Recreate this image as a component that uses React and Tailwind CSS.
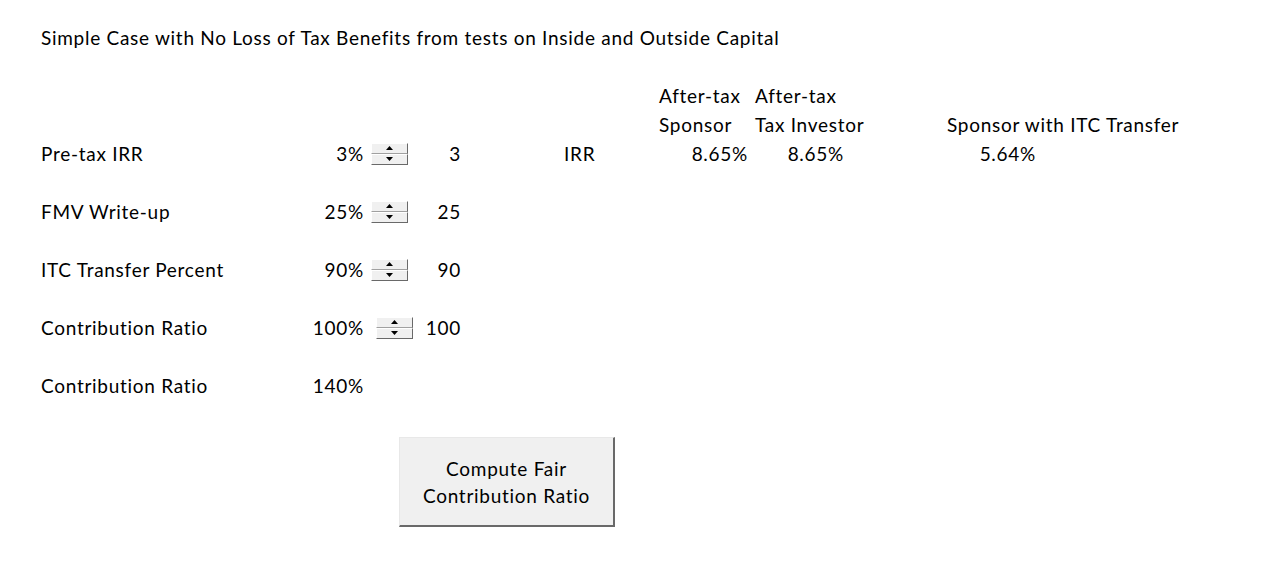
import React from "react";

const font = { fontFamily: "Lato, 'Open Sans', sans-serif", letterSpacing: "0.72px" };

function Spinner({ offset = "ml-[7px]" }) {
  return (
    <div className={`${offset} flex h-[22px] w-[37px] flex-col`}>
      <div className="flex h-[11px] items-center justify-center border-t border-l border-t-white border-l-white border-r border-b border-r-[#696969] border-b-[#a0a0a0] bg-[#f0f0f0]">
        <svg width="7" height="4" viewBox="0 0 7 4">
          <path d="M3.5 0 L7 4 L0 4 Z" fill="#000" />
        </svg>
      </div>
      <div className="flex h-[11px] items-center justify-center border-t border-l border-t-white border-l-white border-r border-b border-r-[#696969] border-b-[#696969] bg-[#f0f0f0]">
        <svg width="7" height="4" viewBox="0 0 7 4">
          <path d="M0 0 L7 0 L3.5 4 Z" fill="#000" />
        </svg>
      </div>
    </div>
  );
}

function InputRow({ label, value, spin, num, spinOffset }) {
  return (
    <>
      <div className="whitespace-nowrap">{label}</div>
      <div className="text-right">{value}</div>
      <div className="flex items-center">{spin && <Spinner offset={spinOffset} />}</div>
      <div className="text-right">{num}</div>
      <div className="col-span-6" />
    </>
  );
}

function Empty() {
  return <div className="col-span-10 h-[29px]" />;
}

export default function App() {
  return (
    <div className="min-h-[571px] w-[1280px] bg-white pt-[23px] text-[19px] text-black" style={font}>
      <div className="grid grid-cols-[220px_103px_51px_46px_103px_91px_96px_96px_96px_240px] auto-rows-[29px] items-center pl-[41px] leading-[29px]">
        <div className="col-span-10 whitespace-nowrap">
          Simple Case with No Loss of Tax Benefits from tests on Inside and Outside Capital
        </div>
        <Empty />

        <div className="col-span-6" />
        <div className="pl-[4px]">After-tax</div>
        <div className="pl-[4px]">After-tax</div>
        <div className="col-span-2" />

        <div className="col-span-6" />
        <div className="pl-[4px] whitespace-nowrap">Sponsor</div>
        <div className="pl-[4px] whitespace-nowrap">Tax Investor</div>
        <div />
        <div className="pl-[4px] whitespace-nowrap">Sponsor with ITC Transfer</div>

        <div>Pre-tax IRR</div>
        <div className="text-right">3%</div>
        <div className="flex items-center"><Spinner /></div>
        <div className="text-right">3</div>
        <div />
        <div>IRR</div>
        <div className="pr-[3px] text-right">8.65%</div>
        <div className="pr-[3px] text-right">8.65%</div>
        <div />
        <div className="w-[96px] pr-[3px] text-right">5.64%</div>

        <Empty />
        <InputRow label="FMV Write-up" value="25%" spin num="25" />
        <Empty />
        <InputRow label="ITC Transfer Percent" value="90%" spin num="90" />
        <Empty />
        <InputRow label="Contribution Ratio" value="100%" spin num="100" spinOffset="ml-[12px]" />
        <Empty />
        <InputRow label="Contribution Ratio" value="140%" />
      </div>

      <button
        type="button"
        className="ml-[399px] mt-[37px] flex h-[90px] w-[216px] flex-col items-center justify-center border-t border-l border-t-[#e8e8e8] border-l-[#e8e8e8] border-r-2 border-b-2 border-r-[#696969] border-b-[#696969] bg-[#f0f0f0] text-[19px] leading-[27px] text-black"
        style={font}
      >
        <span>Compute Fair</span>
        <span>Contribution Ratio</span>
      </button>
    </div>
  );
}
